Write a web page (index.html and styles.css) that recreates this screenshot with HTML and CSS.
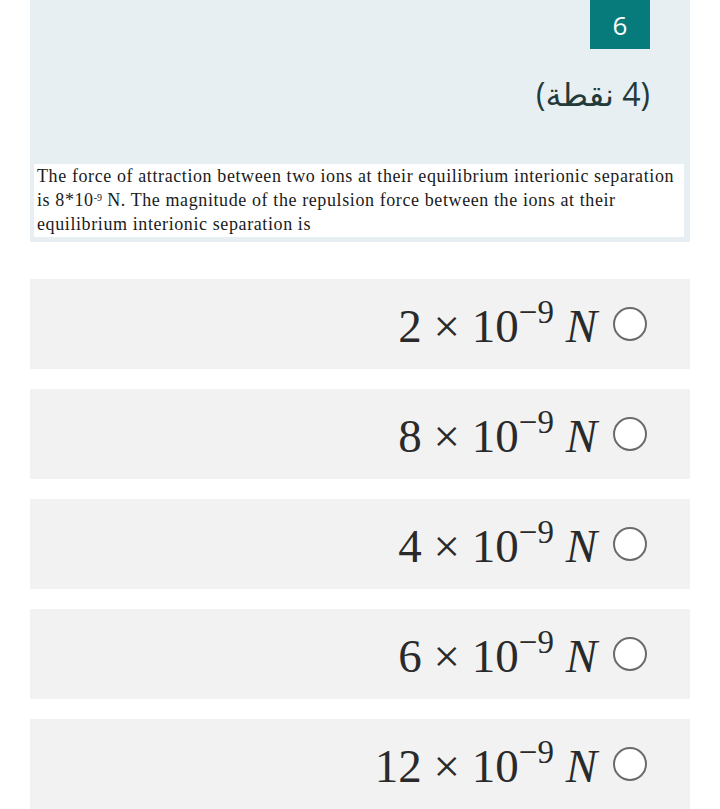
FILE: index.html
```html
<!DOCTYPE html>
<html lang="en">
<head>
<meta charset="utf-8">
<link rel="stylesheet" href="styles.css">
</head>
<body>
<div class="page">
  <div class="header">
    <div class="top">
      <div class="badge">6</div>
      <div class="points" dir="rtl" lang="ar">(4 نقطة)</div>
    </div>
    <div class="question">The force of attraction between two ions at their equilibrium interionic separation is 8*10<sup>-9</sup> N. The magnitude of the repulsion force between the ions at their equilibrium interionic separation is</div>
  </div>
  <div class="options">
    <div class="option"><span class="math">2 × 10<sup>−9</sup> <i>N</i></span><span class="radio"></span></div>
    <div class="option"><span class="math">8 × 10<sup>−9</sup> <i>N</i></span><span class="radio"></span></div>
    <div class="option"><span class="math">4 × 10<sup>−9</sup> <i>N</i></span><span class="radio"></span></div>
    <div class="option"><span class="math">6 × 10<sup>−9</sup> <i>N</i></span><span class="radio"></span></div>
    <div class="option"><span class="math">12 × 10<sup>−9</sup> <i>N</i></span><span class="radio"></span></div>
  </div>
</div>
</body>
</html>
```
FILE: styles.css
```css
html, body {
  margin: 0;
  padding: 0;
  background: #ffffff;
}
.page {
  padding: 0 30px;
}
.header {
  background: #e7eff3;
  padding: 0 6px 5px 4px;
}
.top {
  display: flex;
  flex-direction: column;
  align-items: flex-end;
  padding-right: 34px;
}
.badge {
  width: 60px;
  height: 49px;
  background: #077a7c;
  color: #ffffff;
  font-family: "Open Sans", "Noto Sans", sans-serif;
  font-size: 26px;
  display: flex;
  align-items: center;
  justify-content: center;
}
.points {
  margin-top: 22px;
  font-family: "Open Sans", "DejaVu Sans", sans-serif;
  font-size: 32px;
  line-height: 46px;
  color: #233a3a;
}
.question {
  margin-top: 47px;
  background: #ffffff;
  padding: 0 6px 1px 3px;
  font-family: "Liberation Serif", "Times New Roman", serif;
  font-size: 18px;
  line-height: 24px;
  color: #1a1a1a;
  letter-spacing: 0.6px;
}
.question sup {
  font-size: 10px;
  line-height: 10px;
  vertical-align: 5px;
  letter-spacing: 0;
}
.options {
  margin-top: 37px;
  display: flex;
  flex-direction: column;
  gap: 20px;
}
.option {
  height: 90px;
  background: #f2f2f2;
  display: flex;
  align-items: center;
  justify-content: flex-end;
  padding-right: 43px;
  gap: 16px;
}
.math {
  font-family: "Liberation Serif", "Times New Roman", serif;
  font-size: 47px;
  color: #2a2a2a;
  line-height: 1;
  margin-top: 4px;
}
.math sup {
  font-size: 33px;
  line-height: 0;
  vertical-align: 0.58em;
}
.math i {
  font-family: "Liberation Serif", "Times New Roman", serif;
  font-style: italic;
}
.radio {
  width: 30px;
  height: 30px;
  border: 2px solid #6b6b6b;
  border-radius: 50%;
  background: #ffffff;
  flex: none;
}
```
